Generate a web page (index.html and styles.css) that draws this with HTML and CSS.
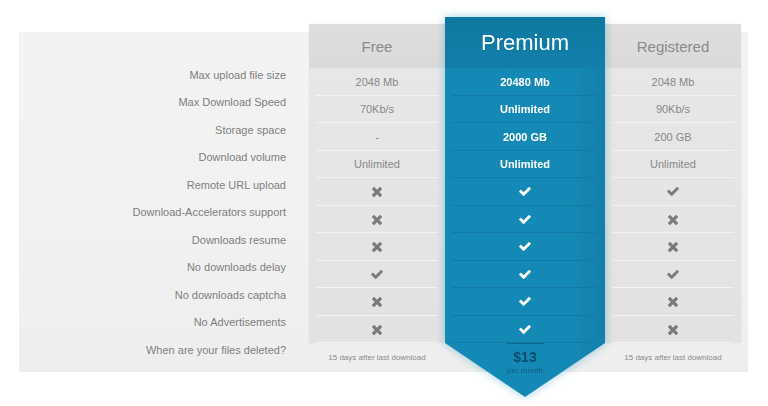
FILE: index.html
```html
<!DOCTYPE html>
<html>
<head>
<meta charset="utf-8">
<link rel="stylesheet" href="styles.css">
</head>
<body>
<div class="page">
  <div class="panel">
    <ul class="labels">
      <li>Max upload file size</li>
      <li>Max Download Speed</li>
      <li>Storage space</li>
      <li>Download volume</li>
      <li>Remote URL upload</li>
      <li>Download-Accelerators support</li>
      <li>Downloads resume</li>
      <li>No downloads delay</li>
      <li>No downloads captcha</li>
      <li>No Advertisements</li>
      <li>When are your files deleted?</li>
    </ul>

    <div class="plan plan-basic">
      <div class="plan-body">
        <div class="plan-head">Free</div>
        <ul class="cells">
          <li>2048 Mb</li>
          <li>70Kb/s</li>
          <li>-</li>
          <li>Unlimited</li>
          <li><svg class="ico-x" viewBox="110 240 1188 1314"><path d="M1298 1322q0 40-28 68l-136 136q-28 28-68 28t-68-28l-294-294-294 294q-28 28-68 28t-68-28l-136-136q-28-28-28-68t28-68l294-294-294-294q-28-28-28-68t28-68l136-136q28-28 68-28t68 28l294 294 294-294q28-28 68-28t68 28l136 136q28 28 28 68t-28 68l-294 294 294 294q28 28 28 68z"/></svg></li>
          <li><svg class="ico-x" viewBox="110 240 1188 1314"><path d="M1298 1322q0 40-28 68l-136 136q-28 28-68 28t-68-28l-294-294-294 294q-28 28-68 28t-68-28l-136-136q-28-28-28-68t28-68l294-294-294-294q-28-28-28-68t28-68l136-136q28-28 68-28t68 28l294 294 294-294q28-28 68-28t68 28l136 136q28 28 28 68t-28 68l-294 294 294 294q28 28 28 68z"/></svg></li>
          <li><svg class="ico-x" viewBox="110 240 1188 1314"><path d="M1298 1322q0 40-28 68l-136 136q-28 28-68 28t-68-28l-294-294-294 294q-28 28-68 28t-68-28l-136-136q-28-28-28-68t28-68l294-294-294-294q-28-28-28-68t28-68l136-136q28-28 68-28t68 28l294 294 294-294q28-28 68-28t68 28l136 136q28 28 28 68t-28 68l-294 294 294 294q28 28 28 68z"/></svg></li>
          <li><svg class="ico-v" viewBox="121 334 1550 1188"><path d="M1671 566q0 40-28 68l-724 724-136 136q-28 28-68 28t-68-28l-136-136-362-362q-28-28-28-68t28-68l136-136q28-28 68-28t68 28l294 295 656-657q28-28 68-28t68 28l136 136q28 28 28 68z"/></svg></li>
          <li><svg class="ico-x" viewBox="110 240 1188 1314"><path d="M1298 1322q0 40-28 68l-136 136q-28 28-68 28t-68-28l-294-294-294 294q-28 28-68 28t-68-28l-136-136q-28-28-28-68t28-68l294-294-294-294q-28-28-28-68t28-68l136-136q28-28 68-28t68 28l294 294 294-294q28-28 68-28t68 28l136 136q28 28 28 68t-28 68l-294 294 294 294q28 28 28 68z"/></svg></li>
          <li><svg class="ico-x" viewBox="110 240 1188 1314"><path d="M1298 1322q0 40-28 68l-136 136q-28 28-68 28t-68-28l-294-294-294 294q-28 28-68 28t-68-28l-136-136q-28-28-28-68t28-68l294-294-294-294q-28-28-28-68t28-68l136-136q28-28 68-28t68 28l294 294 294-294q28-28 68-28t68 28l136 136q28 28 28 68t-28 68l-294 294 294 294q28 28 28 68z"/></svg></li>
        </ul>
      </div>
      <div class="plan-foot">15 days after last download</div>
    </div>

    <div class="plan plan-premium">
      <div class="plan-body">
        <div class="plan-head">Premium</div>
        <ul class="cells">
          <li>20480 Mb</li>
          <li>Unlimited</li>
          <li>2000 GB</li>
          <li>Unlimited</li>
          <li><svg class="ico-v" viewBox="121 334 1550 1188"><path d="M1671 566q0 40-28 68l-724 724-136 136q-28 28-68 28t-68-28l-136-136-362-362q-28-28-28-68t28-68l136-136q28-28 68-28t68 28l294 295 656-657q28-28 68-28t68 28l136 136q28 28 28 68z"/></svg></li>
          <li><svg class="ico-v" viewBox="121 334 1550 1188"><path d="M1671 566q0 40-28 68l-724 724-136 136q-28 28-68 28t-68-28l-136-136-362-362q-28-28-28-68t28-68l136-136q28-28 68-28t68 28l294 295 656-657q28-28 68-28t68 28l136 136q28 28 28 68z"/></svg></li>
          <li><svg class="ico-v" viewBox="121 334 1550 1188"><path d="M1671 566q0 40-28 68l-724 724-136 136q-28 28-68 28t-68-28l-136-136-362-362q-28-28-28-68t28-68l136-136q28-28 68-28t68 28l294 295 656-657q28-28 68-28t68 28l136 136q28 28 28 68z"/></svg></li>
          <li><svg class="ico-v" viewBox="121 334 1550 1188"><path d="M1671 566q0 40-28 68l-724 724-136 136q-28 28-68 28t-68-28l-136-136-362-362q-28-28-28-68t28-68l136-136q28-28 68-28t68 28l294 295 656-657q28-28 68-28t68 28l136 136q28 28 28 68z"/></svg></li>
          <li><svg class="ico-v" viewBox="121 334 1550 1188"><path d="M1671 566q0 40-28 68l-724 724-136 136q-28 28-68 28t-68-28l-136-136-362-362q-28-28-28-68t28-68l136-136q28-28 68-28t68 28l294 295 656-657q28-28 68-28t68 28l136 136q28 28 28 68z"/></svg></li>
          <li><svg class="ico-v" viewBox="121 334 1550 1188"><path d="M1671 566q0 40-28 68l-724 724-136 136q-28 28-68 28t-68-28l-136-136-362-362q-28-28-28-68t28-68l136-136q28-28 68-28t68 28l294 295 656-657q28-28 68-28t68 28l136 136q28 28 28 68z"/></svg></li>
        </ul>
      </div>
      <div class="price">
        <div class="amount">$13</div>
        <div class="per">per month</div>
      </div>
    </div>

    <div class="plan plan-basic">
      <div class="plan-body">
        <div class="plan-head">Registered</div>
        <ul class="cells">
          <li>2048 Mb</li>
          <li>90Kb/s</li>
          <li>200 GB</li>
          <li>Unlimited</li>
          <li><svg class="ico-v" viewBox="121 334 1550 1188"><path d="M1671 566q0 40-28 68l-724 724-136 136q-28 28-68 28t-68-28l-136-136-362-362q-28-28-28-68t28-68l136-136q28-28 68-28t68 28l294 295 656-657q28-28 68-28t68 28l136 136q28 28 28 68z"/></svg></li>
          <li><svg class="ico-x" viewBox="110 240 1188 1314"><path d="M1298 1322q0 40-28 68l-136 136q-28 28-68 28t-68-28l-294-294-294 294q-28 28-68 28t-68-28l-136-136q-28-28-28-68t28-68l294-294-294-294q-28-28-28-68t28-68l136-136q28-28 68-28t68 28l294 294 294-294q28-28 68-28t68 28l136 136q28 28 28 68t-28 68l-294 294 294 294q28 28 28 68z"/></svg></li>
          <li><svg class="ico-x" viewBox="110 240 1188 1314"><path d="M1298 1322q0 40-28 68l-136 136q-28 28-68 28t-68-28l-294-294-294 294q-28 28-68 28t-68-28l-136-136q-28-28-28-68t28-68l294-294-294-294q-28-28-28-68t28-68l136-136q28-28 68-28t68 28l294 294 294-294q28-28 68-28t68 28l136 136q28 28 28 68t-28 68l-294 294 294 294q28 28 28 68z"/></svg></li>
          <li><svg class="ico-v" viewBox="121 334 1550 1188"><path d="M1671 566q0 40-28 68l-724 724-136 136q-28 28-68 28t-68-28l-136-136-362-362q-28-28-28-68t28-68l136-136q28-28 68-28t68 28l294 295 656-657q28-28 68-28t68 28l136 136q28 28 28 68z"/></svg></li>
          <li><svg class="ico-x" viewBox="110 240 1188 1314"><path d="M1298 1322q0 40-28 68l-136 136q-28 28-68 28t-68-28l-294-294-294 294q-28 28-68 28t-68-28l-136-136q-28-28-28-68t28-68l294-294-294-294q-28-28-28-68t28-68l136-136q28-28 68-28t68 28l294 294 294-294q28-28 68-28t68 28l136 136q28 28 28 68t-28 68l-294 294 294 294q28 28 28 68z"/></svg></li>
          <li><svg class="ico-x" viewBox="110 240 1188 1314"><path d="M1298 1322q0 40-28 68l-136 136q-28 28-68 28t-68-28l-294-294-294 294q-28 28-68 28t-68-28l-136-136q-28-28-28-68t28-68l294-294-294-294q-28-28-28-68t28-68l136-136q28-28 68-28t68 28l294 294 294-294q28-28 68-28t68 28l136 136q28 28 28 68t-28 68l-294 294 294 294q28 28 28 68z"/></svg></li>
        </ul>
      </div>
      <div class="plan-foot">15 days after last download</div>
    </div>
  </div>
</div>
</body>
</html>
```

FILE: styles.css
```css
html, body {
  margin: 0;
  padding: 0;
  background: #ffffff;
  font-family: "Liberation Sans", Arial, sans-serif;
}

.page {
  box-sizing: border-box;
  min-height: 406px;
  padding: 32px 20px 0 19px;
}

.panel {
  width: 722px;
  height: 340px;
  padding-right: 7px;
  display: flex;
  align-items: flex-start;
  background: linear-gradient(180deg, #f3f3f3 0%, #f1f1f1 60%, #eeeeee 100%);
}

.labels {
  list-style: none;
  margin: 0;
  padding: 29px 23px 0 0;
  width: 267px;
  flex: none;
}

.labels li {
  height: 27.5px;
  display: flex;
  align-items: center;
  justify-content: flex-end;
  font-size: 11px;
  color: #7e7e7e;
  white-space: nowrap;
}

.plan {
  flex: none;
  display: flex;
  flex-direction: column;
}

.plan-basic {
  width: 136px;
  margin-top: -8px;
}

.plan-basic .plan-body {
  background: linear-gradient(180deg, #e8e8e8 0%, #e2e2e2 100%);
  box-shadow: 0 0 2px rgba(0, 0, 0, 0.06);
}

.plan-basic .plan-head {
  height: 44px;
  display: flex;
  align-items: center;
  justify-content: center;
  font-size: 15px;
  color: #8a8a8a;
  background: linear-gradient(180deg, #dedede 0%, #dadada 100%);
}

.cells {
  list-style: none;
  margin: 0;
  padding: 0;
}

.cells li {
  height: 27.5px;
  display: flex;
  align-items: center;
  justify-content: center;
  font-size: 11px;
  background-repeat: no-repeat;
  background-position: 7px 100%;
  background-size: calc(100% - 14px) 1px;
}

.plan-basic .cells li {
  color: #888888;
  background-image: linear-gradient(#f3f3f3, #f3f3f3);
}

.plan-foot {
  height: 28px;
  display: flex;
  align-items: center;
  justify-content: center;
  font-size: 8px;
  color: #8a8a8a;
}

.ico-x {
  width: 10px;
  height: 11px;
  fill: #7a7a7a;
}

.ico-v {
  width: 12px;
  height: 9px;
  fill: #7a7a7a;
}

.plan-premium {
  width: 160px;
  margin-top: -15px;
  position: relative;
  z-index: 1;
  filter: drop-shadow(0 0 5px rgba(40, 150, 190, 0.45));
}

.plan-premium .plan-body {
  background: linear-gradient(90deg, #1589b5 0%, #1589b5 80%, #127fab 100%);
}

.plan-premium .plan-head {
  height: 51px;
  display: flex;
  align-items: center;
  justify-content: center;
  font-size: 22px;
  color: #ffffff;
  background: linear-gradient(180deg, #0e78a0 0%, #127fab 100%);
}

.plan-premium .cells li {
  color: #ffffff;
  font-weight: bold;
  background-image: linear-gradient(#137aa3, #137aa3);
}

.plan-premium .ico-v {
  fill: #ffffff;
}

.price {
  flex: none;
  height: 54px;
  display: flex;
  flex-direction: column;
  align-items: center;
  background:
    linear-gradient(#0b6a90, #0b6a90) 50% 0 / 38px 1px no-repeat,
    linear-gradient(90deg, #1589b5 0%, #1589b5 80%, #127fab 100%);
  clip-path: polygon(0 0, 100% 0, 50% 100%);
}

.amount {
  margin-top: 6px;
  font-size: 14px;
  font-weight: bold;
  line-height: 16px;
  color: #0b4d6c;
}

.per {
  font-size: 8px;
  line-height: 10px;
  margin-top: 1px;
  color: #0d5a7e;
}
```
